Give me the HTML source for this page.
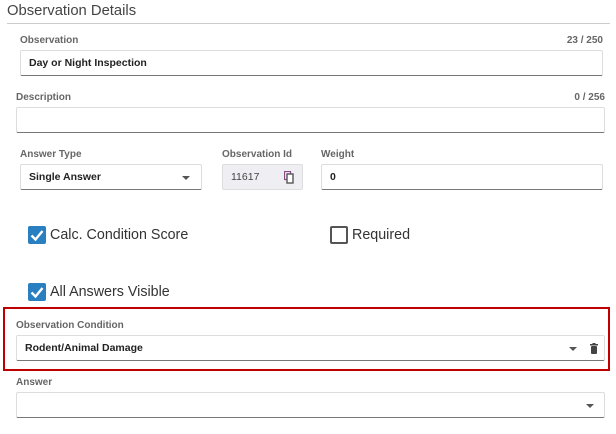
<!DOCTYPE html>
<html><head><style>
*{box-sizing:border-box;margin:0;padding:0}
body{width:616px;height:434px;background:#fff;font-family:"Liberation Sans",sans-serif;position:relative;overflow:hidden;color:#222}
.a{position:absolute}
.t{left:7px;top:3px;font-size:14.8px;color:#444}
.hr{left:7px;top:23px;width:603px;height:1px;background:#ccc}
.lb{font-size:10px;font-weight:bold;color:#666}
.in{border:1px solid #ddd;border-bottom:1px solid #777;border-radius:2px;background:#fff;font-size:10.5px;font-weight:bold;color:#222;padding-left:8px;display:flex;align-items:center}
.cb{width:18px;height:18px;background:#2a7fc1;border-radius:2px}
.cb svg{display:block}
.ct{font-size:14.3px;color:#333}
.car{position:absolute;width:0;height:0;border-left:4.5px solid transparent;border-right:4.5px solid transparent;border-top:4.5px solid #555}
</style></head><body>
<div class="a t">Observation Details</div>
<div class="a hr"></div>

<div class="a lb" style="left:20px;top:35px">Observation</div>
<div class="a lb" style="right:13px;top:35px">23 / 250</div>
<div class="a in" style="left:20px;top:50px;width:583px;height:26px">Day or Night Inspection</div>

<div class="a lb" style="left:16px;top:92px">Description</div>
<div class="a lb" style="right:11px;top:92px">0 / 256</div>
<div class="a in" style="left:16px;top:107px;width:589px;height:26px"></div>

<div class="a lb" style="left:20px;top:149px">Answer Type</div>
<div class="a in" style="left:20px;top:164px;width:182px;height:26px">Single Answer<span class="car" style="right:11px;top:11px"></span></div>
<div class="a lb" style="left:222px;top:149px">Observation Id</div>
<div class="a in" style="left:222px;top:164px;width:81px;height:26px;background:#efeff3;font-weight:normal;color:#444;border-color:#ddd">11617
<svg class="a" style="left:61px;top:6px" width="10" height="13" viewBox="0 0 10 13"><rect x="0.5" y="0.5" width="6" height="8" fill="none" stroke="#8a4a8a" stroke-width="1.2"/><rect x="3" y="3" width="6" height="9" fill="#fff" stroke="#555" stroke-width="1.4"/></svg></div>
<div class="a lb" style="left:321px;top:149px">Weight</div>
<div class="a in" style="left:321px;top:164px;width:282px;height:26px">0</div>

<div class="a cb" style="left:28px;top:226px"><svg width="18" height="18"><path d="M3.5 9.5 L7.5 13.5 L14.5 5" stroke="#fff" stroke-width="2.4" fill="none"/></svg></div>
<div class="a ct" style="left:50px;top:227px">Calc. Condition Score</div>
<div class="a" style="left:330px;top:226px;width:18px;height:18px;border:2px solid #555;border-radius:2px"></div>
<div class="a ct" style="left:352px;top:227px">Required</div>

<div class="a cb" style="left:28px;top:283px"><svg width="18" height="18"><path d="M3.5 9.5 L7.5 13.5 L14.5 5" stroke="#fff" stroke-width="2.4" fill="none"/></svg></div>
<div class="a ct" style="left:50px;top:284px">All Answers Visible</div>

<div class="a" style="left:3px;top:307px;width:607px;height:64px;border:2px solid #c00000"></div>
<div class="a lb" style="left:16px;top:320px">Observation Condition</div>
<div class="a in" style="left:16px;top:335px;width:589px;height:26px">Rodent/Animal Damage<span class="car" style="right:27px;top:11px"></span>
<svg class="a" style="right:6px;top:7px" width="8" height="11" viewBox="0 0 8 11"><rect x="0" y="1" width="8" height="1.5" fill="#444"/><rect x="2.5" y="0" width="3" height="1.5" fill="#444"/><rect x="1" y="3" width="6" height="8" rx="1" fill="#444"/></svg></div>

<div class="a lb" style="left:16px;top:377px">Answer</div>
<div class="a in" style="left:16px;top:392px;width:589px;height:26px"><span class="car" style="right:10px;top:11px"></span></div>
</body></html>
